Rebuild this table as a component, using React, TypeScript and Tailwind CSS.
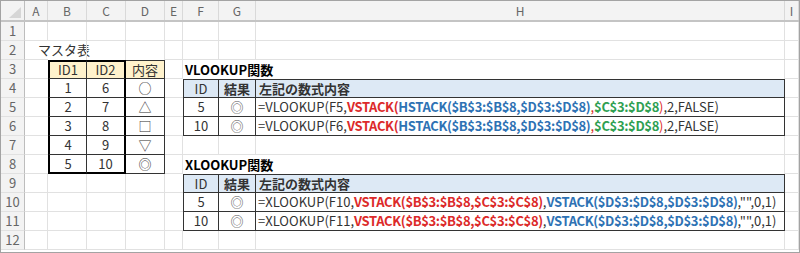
import type { ReactNode } from "react";

const COLS = "grid grid-cols-[24px_23px_39px_39px_39px_18px_36px_37px_529px_1fr]";
const GRID = "border-r border-b border-[#e1e1e1]";
const NO_R = "border-b border-[#e1e1e1]";
const NO_B = "border-r border-[#e1e1e1]";

// master table borders
const M_B = "border-l-2 border-l-black border-r border-r-[#333] border-b border-b-[#333]";
const M_C = "border-r-2 border-r-black border-b border-b-[#333]";
const M_D = "border-r border-b border-[#333]";
const HEAD = "bg-[#fff2cc]";

// lookup table borders
const T = "border-r border-b border-[#333]";
const T_TOP = "border-t border-r border-b border-[#333] bg-[#dde9f5]";
const T_LEFT = "border-l border-r border-b border-[#333]";
const T_CORNER = "border-l border-t border-r border-b border-[#333] bg-[#dde9f5]";

const RED = "text-[#dc2a2a] font-bold tracking-[-0.35px]";
const BLUE = "text-[#2e72b4] font-bold tracking-[-0.35px]";
const GREEN = "text-[#2fa052] font-bold tracking-[-0.35px]";

function Cell({ children, b = GRID, className = "" }: { children?: ReactNode; b?: string; className?: string }) {
  return (
    <div className={`h-[19px] flex items-center whitespace-nowrap ${b} ${className}`}>
      {children}
    </div>
  );
}

function Row({ n, children }: { n: number; children?: ReactNode }) {
  return (
    <div className={COLS}>
      <div className="h-[19px] flex items-center justify-center bg-[#f3f3f3] border-r border-r-[#bdbdbd] border-b border-b-[#e1e1e1] text-[13px] text-[#666]">
        {n}
      </div>
      {children}
    </div>
  );
}

function Empty({ count }: { count: number }) {
  return (
    <>
      {Array.from({ length: count }, (_, i) => (
        <Cell key={i} />
      ))}
    </>
  );
}

function MasterCells({ a, b, c, top, last }: { a: string; b: string; c: string; top?: boolean; last?: boolean }) {
  const t2 = top ? "border-t-2 border-t-black" : "";
  const bb = last ? "border-b-2 border-b-black" : "";
  const fill = top ? HEAD : "";
  return (
    <>
      <Cell b={`${M_B} ${t2} ${bb}`} className={`justify-center ${fill}`}>{a}</Cell>
      <Cell b={`${M_C} ${t2} ${bb}`} className={`justify-center ${fill}`}>{b}</Cell>
      <Cell b={`${M_D} ${top ? "border-t border-t-[#333]" : ""}`} className={`justify-center ${fill}`}>{c}</Cell>
    </>
  );
}

function VFormula({ f }: { f: string }) {
  return (
    <>
      <span>=VLOOKUP({f},</span>
      <span className={RED}>VSTACK(</span>
      <span className={BLUE}>HSTACK($B$3:$B$8,$D$3:$D$8)</span>
      <span className="text-[#dc2a2a]">,</span>
      <span className={GREEN}>$C$3:$D$8</span>
      <span className="text-[#dc2a2a]">)</span>
      <span>,2,FALSE)</span>
    </>
  );
}

function XFormula({ f }: { f: string }) {
  return (
    <>
      <span>=XLOOKUP({f},</span>
      <span className={RED}>VSTACK($B$3:$B$8,$C$3:$C$8)</span>
      <span>,</span>
      <span className={BLUE}>VSTACK($D$3:$D$8,$D$3:$D$8)</span>
      <span>,"",0,1)</span>
    </>
  );
}

function TableHead() {
  return (
    <>
      <Cell b={T_CORNER} className="justify-center">ID</Cell>
      <Cell b={T_TOP} className="justify-center font-bold">結果</Cell>
      <Cell b={T_TOP} className="pl-[3px] font-bold">左記の数式内容</Cell>
    </>
  );
}

function TableRow({ id, children }: { id: string; children: ReactNode }) {
  return (
    <>
      <Cell b={T_LEFT} className="justify-center">{id}</Cell>
      <Cell b={T} className="justify-center text-[#555]">◎</Cell>
      <Cell b={T} className="pl-[2px]">{children}</Cell>
    </>
  );
}

export default function App() {
  const letters = ["A", "B", "C", "D", "E", "F", "G", "H", "I"];
  return (
    <div className="w-[800px] h-[253px] overflow-hidden bg-white border border-[#a3a3a3] font-['Noto_Sans_CJK_JP',sans-serif] text-[13px] text-[#333]">
      {/* column headers */}
      <div className={`${COLS} h-[21px] bg-[#f3f3f3] border-b-2 border-b-[#c4c4c4]`}>
        <div className="border-r border-r-[#bdbdbd] flex items-end justify-end pr-[3px] pb-[2px]">
          <svg width="12" height="11" viewBox="0 0 12 11">
            <polygon points="12,0 12,11 0,11" fill="#d6d6d6" />
          </svg>
        </div>
        {letters.map((l) => (
          <div key={l} className="flex items-center justify-center border-r border-r-[#d9d9d9] text-[12px] text-[#666]">
            {l}
          </div>
        ))}
      </div>

      <Row n={1}>
        <Empty count={9} />
      </Row>

      <Row n={2}>
        <Cell b={NO_R} className="pl-[13px]">マスタ表</Cell>
        <Cell b={NO_B} />
        <Cell b={NO_B} />
        <Cell b={NO_B} />
        <Empty count={5} />
      </Row>

      <Row n={3}>
        <Cell b={NO_R} />
        <MasterCells a="ID1" b="ID2" c="内容" top />
        <Cell />
        <Cell b={NO_B} className="col-span-3 pl-[2px] font-bold text-black">VLOOKUP関数</Cell>
        <Cell />
      </Row>

      <Row n={4}>
        <Cell b={NO_R} />
        <MasterCells a="1" b="6" c="○" />
        <Cell b={NO_R} />
        <TableHead />
        <Cell />
      </Row>

      <Row n={5}>
        <Cell b={NO_R} />
        <MasterCells a="2" b="7" c="△" />
        <Cell b={NO_R} />
        <TableRow id="5">
          <VFormula f="F5" />
        </TableRow>
        <Cell />
      </Row>

      <Row n={6}>
        <Cell b={NO_R} />
        <MasterCells a="3" b="8" c="□" />
        <Cell b={NO_R} />
        <TableRow id="10">
          <VFormula f="F6" />
        </TableRow>
        <Cell />
      </Row>

      <Row n={7}>
        <Cell b={NO_R} />
        <MasterCells a="4" b="9" c="▽" />
        <Cell />
        <Empty count={4} />
      </Row>

      <Row n={8}>
        <Cell b={NO_R} />
        <MasterCells a="5" b="10" c="◎" last />
        <Cell />
        <Cell b={NO_B} className="col-span-3 pl-[2px] font-bold text-black">XLOOKUP関数</Cell>
        <Cell />
      </Row>

      <Row n={9}>
        <Empty count={4} />
        <Cell b={NO_R} />
        <TableHead />
        <Cell />
      </Row>

      <Row n={10}>
        <Empty count={4} />
        <Cell b={NO_R} />
        <TableRow id="5">
          <XFormula f="F10" />
        </TableRow>
        <Cell />
      </Row>

      <Row n={11}>
        <Empty count={4} />
        <Cell b={NO_R} />
        <TableRow id="10">
          <XFormula f="F11" />
        </TableRow>
        <Cell />
      </Row>

      <Row n={12}>
        <Empty count={9} />
      </Row>
    </div>
  );
}
